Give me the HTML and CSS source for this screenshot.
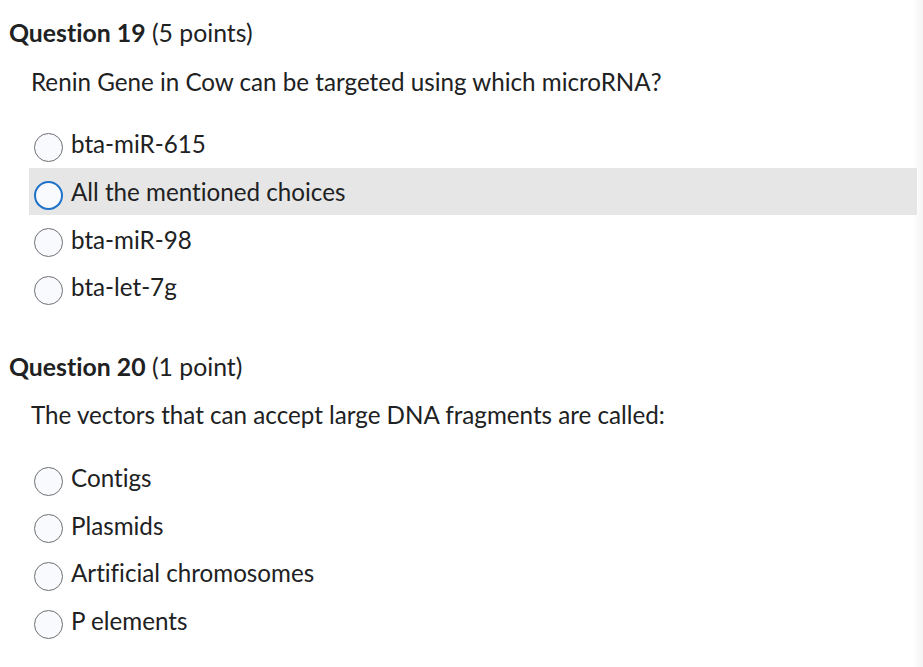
FILE: index.html
```html
<!DOCTYPE html>
<html>
<head>
<meta charset="utf-8">
<link rel="stylesheet" href="styles.css">
</head>
<body>
<div class="page">
  <section class="question">
    <h2 class="q-title"><span class="q-num">Question 19</span> (5 points)</h2>
    <p class="q-text">Renin Gene in Cow can be targeted using which microRNA?</p>
    <ul class="options">
      <li class="option"><span class="radio"></span><span class="label">bta-miR-615</span></li>
      <li class="option hover"><span class="radio focus"></span><span class="label">All the mentioned choices</span></li>
      <li class="option"><span class="radio"></span><span class="label">bta-miR-98</span></li>
      <li class="option"><span class="radio"></span><span class="label">bta-let-7g</span></li>
    </ul>
  </section>
  <section class="question">
    <h2 class="q-title"><span class="q-num">Question 20</span> (1 point)</h2>
    <p class="q-text">The vectors that can accept large DNA fragments are called:</p>
    <ul class="options">
      <li class="option"><span class="radio"></span><span class="label">Contigs</span></li>
      <li class="option"><span class="radio"></span><span class="label">Plasmids</span></li>
      <li class="option"><span class="radio"></span><span class="label">Artificial chromosomes</span></li>
      <li class="option"><span class="radio"></span><span class="label">P elements</span></li>
    </ul>
  </section>
</div>
</body>
</html>
```

FILE: styles.css
```css
html, body {
  margin: 0;
  padding: 0;
}
body {
  font-family: Lato, "Open Sans", sans-serif;
  font-variant-ligatures: none;
  font-feature-settings: "liga" 0, "clig" 0;
  color: #202122;
  background: linear-gradient(to right, #ffffff calc(100% - 10px), #f4f4f4 100%);
  min-height: 667px;
}
.page {
  width: 917px;
}
.question {
  padding-top: 17px;
  margin-bottom: 23px;
}
.q-title {
  margin: 0 0 0 9px;
  font-size: 24.8px;
  line-height: 32px;
  font-weight: 400;
}
.q-num {
  font-weight: 700;
}
.q-text {
  margin: 16.5px 0 0 31px;
  font-size: 24.2px;
  line-height: 32px;
}
.options {
  list-style: none;
  margin: 22.5px 0 0 29px;
  padding: 0;
}
.option {
  display: flex;
  align-items: center;
  height: 47.7px;
  font-size: 24.2px;
}
.option.hover {
  background: #e6e6e6;
}
.radio {
  box-sizing: border-box;
  width: 29px;
  height: 29px;
  margin-left: 5px;
  margin-top: 7px;
  border: 1px solid #6f7074;
  border-radius: 50%;
  background: #f9fafe;
  flex: none;
}
.radio.focus {
  border: 2px solid #1f73c9;
}
.label {
  margin-left: 8px;
}
```
